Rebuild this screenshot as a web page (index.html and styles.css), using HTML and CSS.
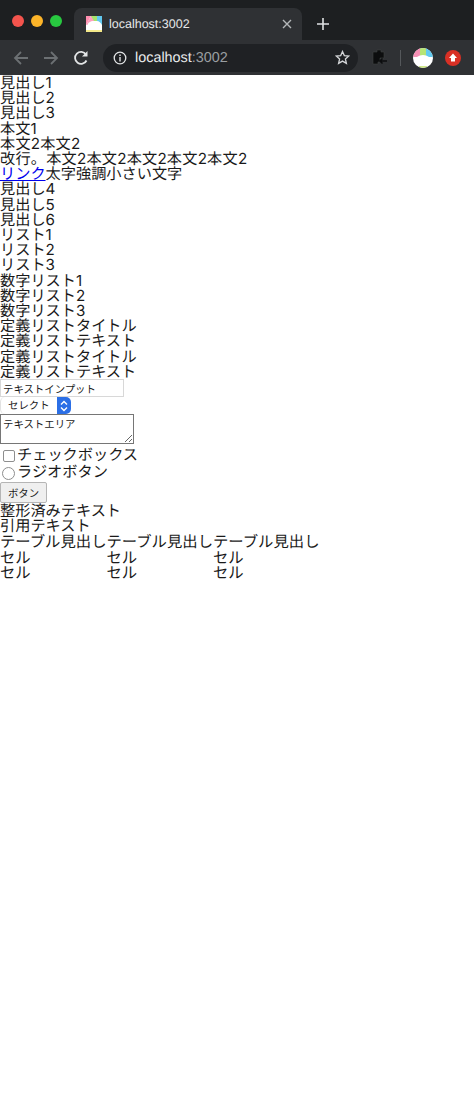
FILE: index.html

```html
<!DOCTYPE html>
<html lang="ja">
<head>
  <meta charset="UTF-8" />
  <meta name="viewport" content="width=device-width, initial-scale=1.0" />
  <title>localhost:3002</title>
  <link rel="stylesheet" href="styles.css">
</head>
<body>

<header class="browser">
  <div class="tabbar">
    <div class="lights">
      <span class="light red"></span>
      <span class="light yellow"></span>
      <span class="light green"></span>
    </div>
    <div class="tab">
      <svg class="favicon" width="16" height="16" viewBox="0 0 16 16">
        <rect width="16" height="16" fill="#fff"/>
        <path d="M0 0H5L0 9Z" fill="#ff8fb0"/>
        <path d="M0 9L5 0H8V5C4 5 2 7 1.500 9Z" fill="#ff9fc0"/>
        <path d="M5 0H16V5H8Z" fill="#a6e36c"/>
        <path d="M11 0H16V9C15 7 13 5 11 5Z" fill="#62c8ef"/>
        <path d="M3 13C3 9 5 7 8 7S13 9 13 13Z" fill="#fff"/>
        <rect y="14" width="16" height="2" fill="#f4e98a"/>
      </svg>
      <span class="tab-title">localhost:3002</span>
      <svg class="tab-close" width="10" height="10" viewBox="0 0 10 10">
        <path d="M1 1L9 9M9 1L1 9" stroke="#b4b7b9" stroke-width="1.400"/>
      </svg>
    </div>
    <svg class="new-tab" width="14" height="14" viewBox="0 0 14 14">
      <path d="M7 1V13M1 7H13" stroke="#dfe1e3" stroke-width="1.600"/>
    </svg>
  </div>
  <div class="toolbar">
    <svg class="tool" width="16" height="16" viewBox="0 0 16 16">
      <path d="M15 8H2M8 2L2 8L8 14" fill="none" stroke="#6c7073" stroke-width="1.800"/>
    </svg>
    <svg class="tool" width="16" height="16" viewBox="0 0 16 16">
      <path d="M1 8H14M8 2L14 8L8 14" fill="none" stroke="#6c7073" stroke-width="1.800"/>
    </svg>
    <svg class="tool" width="16" height="16" viewBox="0 0 16 16">
      <path d="M13.500 10.500A6 6 0 1 1 13 4.500" fill="none" stroke="#e3e5e6" stroke-width="1.800"/>
      <path d="M14.500 1V6.500H9Z" fill="#e3e5e6"/>
    </svg>
    <div class="omnibox">
      <svg class="info" width="14" height="14" viewBox="0 0 14 14">
        <circle cx="7" cy="7" r="5.800" fill="none" stroke="#e3e5e6" stroke-width="1.300"/>
        <path d="M7 6V10.500M7 3.500V5" stroke="#e3e5e6" stroke-width="1.400"/>
      </svg>
      <span class="url">localhost<span class="url-port">:3002</span></span>
      <svg class="star" width="15" height="15" viewBox="0 0 15 15">
        <path d="M7.500 1.500L9.300 5.600L13.800 6L10.400 9L11.400 13.400L7.500 11.100L3.600 13.400L4.600 9L1.200 6L5.700 5.600Z" fill="none" stroke="#d5d7d9" stroke-width="1.300"/>
      </svg>
    </div>
    <svg class="clip" width="16" height="18" viewBox="0 0 16 18">
      <path d="M1 3H5V1H9V3H12V9H8V13H6V15H1Z" fill="#0c0d0e" stroke="#3c3f42" stroke-width=".6"/>
      <path d="M15 12H8M10.500 9.500L8 12L10.500 14.500" fill="none" stroke="#0c0d0e" stroke-width="1.500"/>
    </svg>
    <span class="divider"></span>
    <svg class="avatar" width="20" height="20" viewBox="0 0 20 20">
      <defs><clipPath id="round"><circle cx="10" cy="10" r="10"/></clipPath></defs>
      <g clip-path="url(#round)">
        <rect width="20" height="20" fill="#fff"/>
        <rect width="7" height="9" fill="#f58fb4"/>
        <rect x="7" width="6" height="9" fill="#b6e474"/>
        <rect x="13" width="7" height="9" fill="#61c9ef"/>
        <ellipse cx="10" cy="13" rx="8" ry="6" fill="#fff"/>
        <rect x="6" y="18" width="8" height="2" fill="#cfe88a"/>
      </g>
    </svg>
    <svg class="update" width="16" height="16" viewBox="0 0 16 16">
      <circle cx="8" cy="8" r="8" fill="#d93025"/>
      <path d="M8 3.500L12 8H10V11.500H6V8H4Z" fill="#fff"/>
    </svg>
  </div>
</header>

<main class="page">
  <h1>見出し1</h1>
  <h2>見出し2</h2>
  <h3>見出し3</h3>
  <p>本文1</p>
  <p class="long-text">本文2本文2<br>改行。本文2本文2本文2本文2本文2</p>
  <p><a href="#">リンク</a>太字強調小さい文字</p>
  <h4>見出し4</h4>
  <h5>見出し5</h5>
  <h6>見出し6</h6>
  <ul>
    <li>リスト1</li>
    <li>リスト2</li>
    <li>リスト3</li>
  </ul>
  <ol>
    <li>数字リスト1</li>
    <li>数字リスト2</li>
    <li>数字リスト3</li>
  </ol>
  <dl>
    <dt>定義リストタイトル</dt>
    <dd>定義リストテキスト</dd>
    <dt>定義リストタイトル</dt>
    <dd>定義リストテキスト</dd>
  </dl>
  <form class="fields">
    <input class="text-input" type="text" value="テキストインプット" />
    <div class="select"><span>セレクト</span><span class="select-arrows">
      <svg width="8" height="12" viewBox="0 0 8 12">
        <path d="M1 4.500L4 1.500L7 4.500M1 7.500L4 10.500L7 7.500" fill="none" stroke="#fff" stroke-width="1.400"/>
      </svg>
    </span></div>
    <textarea class="text-area">テキストエリア</textarea>
    <label class="choice"><input class="check" type="checkbox" />チェックボックス</label>
    <label class="choice"><input class="radio" type="radio" />ラジオボタン</label>
    <button type="button">ボタン</button>
  </form>
  <pre>整形済みテキスト</pre>
  <blockquote>引用テキスト</blockquote>
  <table>
    <tr><th>テーブル見出し</th><th>テーブル見出し</th><th>テーブル見出し</th></tr>
    <tr><td>セル</td><td>セル</td><td>セル</td></tr>
    <tr><td>セル</td><td>セル</td><td>セル</td></tr>
  </table>
</main>

</body>
</html>
```

FILE: styles.css

```css
* {
  box-sizing: border-box;
}
body {
  margin: 0;
  background: #fff;
  color: #1a1a1a;
  font-family: "Liberation Sans", "Noto Sans CJK JP", sans-serif;
  text-rendering: geometricPrecision;
}
.browser {
  height: 75px;
  background: #2f3134;
}
.tabbar {
  height: 40px;
  padding-top: 8px;
  background: #1d1f21;
  display: flex;
  align-items: flex-start;
}
.lights {
  display: flex;
  gap: 7px;
  padding: 7px 0 0 12px;
  width: 74px;
}
.light {
  width: 12px;
  height: 12px;
  border-radius: 50%;
}
.light.red { background: #f4544d; }
.light.yellow { background: #fcb429; }
.light.green { background: #28c840; }
.tab {
  width: 228px;
  height: 32px;
  padding: 0 10px 0 12px;
  background: #2f3134;
  border-radius: 8px 8px 0 0;
  display: flex;
  align-items: center;
}
.favicon {
  flex: none;
}
.tab-title {
  flex: 1;
  margin-left: 7px;
  font-size: 12.500px;
  color: #e6e7e8;
}
.new-tab {
  margin: 9px 0 0 14px;
}
.toolbar {
  height: 35px;
  display: flex;
  align-items: center;
  padding-left: 13px;
}
.tool {
  margin-right: 14px;
}
.omnibox {
  width: 255px;
  height: 28px;
  padding: 0 8px 0 10px;
  background: #1f2124;
  border-radius: 14px;
  display: flex;
  align-items: center;
}
.url {
  flex: 1;
  margin-left: 8px;
  font-size: 14.400px;
  color: #e8eaeb;
}
.url-port {
  color: #9a9ea1;
}
.clip {
  margin-left: 14px;
}
.divider {
  width: 1px;
  height: 16px;
  margin-left: 12px;
  background: #55585b;
}
.avatar {
  margin-left: 12px;
}
.update {
  margin-left: 12px;
}
.page {
  font-family: Inter, "Noto Sans CJK JP", sans-serif;
  font-size: 15.200px;
  line-height: 15.200px;
}
h1, h2, h3, h4, h5, h6, p, ul, ol, dl, dd, pre, blockquote {
  margin: 0;
  padding: 0;
  font: inherit;
}
.long-text {
  letter-spacing: .2px;
}
li {
  list-style: none;
}
a {
  color: #0000ee;
}
.fields {
  display: block;
}
.text-input {
  display: block;
  width: 124px;
  height: 18px;
  margin: 0;
  padding: 0 2px;
  border: 1px solid #d8d8d8;
  font: 10.400px "Liberation Sans", "Noto Sans CJK JP", sans-serif;
  color: #1a1a1a;
}
.select {
  width: 71px;
  height: 17px;
  padding-left: 7px;
  display: flex;
  align-items: center;
  justify-content: space-between;
  background: #fff;
  border-left: 1px solid #e2e2e2;
  border-radius: 5px;
  font-size: 10.400px;
  line-height: 17px;
}
.select-arrows {
  width: 14px;
  height: 17px;
  background: #2b6fe6;
  border-radius: 0 5px 5px 0;
  display: flex;
  align-items: center;
  justify-content: center;
}
.text-area {
  display: block;
  width: 134px;
  height: 30px;
  margin: 0 0 2px;
  padding: 4px 2px 2px;
  border: 1px solid #767676;
  font: 10.400px/12px "Liberation Sans", "Noto Sans CJK JP", sans-serif;
  color: #1a1a1a;
}
.choice {
  display: flex;
  align-items: center;
  height: 17px;
}
.check, .radio {
  appearance: none;
  margin: 3px 2px 0 3px;
  background: #fff;
  border: 1px solid #8e8e8e;
}
.check {
  width: 12px;
  height: 12px;
  border-radius: 2px;
}
.radio {
  width: 13px;
  height: 13px;
  margin-left: 2px;
  border-radius: 50%;
}
button {
  display: block;
  width: 47px;
  height: 21px;
  margin: 2px 0 0;
  padding: 0;
  background: #efefef;
  border: 1px solid #b5b5b5;
  border-radius: 2px;
  font: 10.400px "Liberation Sans", "Noto Sans CJK JP", sans-serif;
  color: #1a1a1a;
}
pre {
  font-family: inherit;
}
table {
  margin-top: 1px;
  font-size: 15.350px;
  border-collapse: collapse;
  border-spacing: 0;
}
th, td {
  padding: 0;
  font-weight: 400;
  text-align: left;
}
```
